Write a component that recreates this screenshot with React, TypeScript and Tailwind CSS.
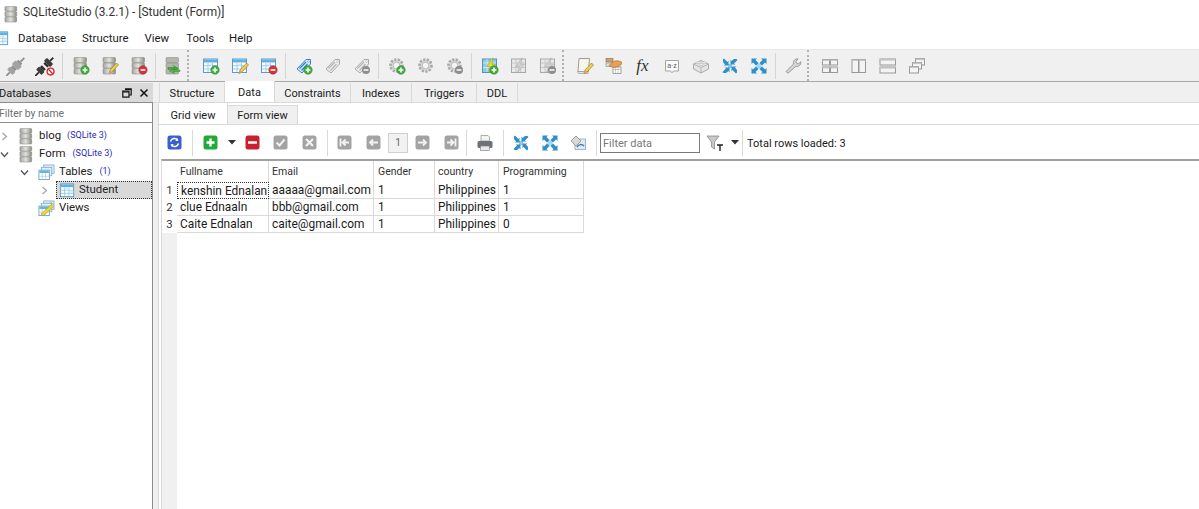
import React from "react";

type P = { className?: string };

const Badge = ({ kind }: { kind?: string }) => {
  if (kind === "add")
    return (
      <g>
        <circle cx="13" cy="13" r="4.2" fill="#3fae3c" stroke="#1f7a1f" strokeWidth="0.5" />
        <path d="M10.6 13h4.8M13 10.6v4.8" stroke="#fff" strokeWidth="1.6" />
      </g>
    );
  if (kind === "del")
    return (
      <g>
        <circle cx="13" cy="13" r="4.2" fill="#d8333a" stroke="#9a1f22" strokeWidth="0.5" />
        <path d="M10.6 13h4.8" stroke="#fff" strokeWidth="1.6" />
      </g>
    );
  if (kind === "delgray")
    return (
      <g>
        <circle cx="13" cy="13" r="4" fill="#8d8d8d" />
        <path d="M10.6 13h4.8" stroke="#fff" strokeWidth="1.5" />
      </g>
    );
  if (kind === "edit")
    return (
      <g>
        <path d="M8 16.5l1-3.5 6.5-7 2 2-6.5 7z" fill="#f3cf4a" stroke="#8f6d16" strokeWidth="0.6" />
        <path d="M8 16.5l1-3.5 2.5 2z" fill="#e8a070" />
      </g>
    );
  return null;
};

const Svg = ({ children, w = 18, h = 18 }: { children: React.ReactNode; w?: number; h?: number }) => (
  <svg width={w} height={h} viewBox="0 0 18 18" className="shrink-0">
    {children}
  </svg>
);

const Db = ({ badge, size = 18 }: { badge?: string; size?: number }) => (
  <Svg w={size} h={size}>
    <defs>
      <linearGradient id="dbg" x1="0" x2="1" y1="0" y2="0">
        <stop offset="0" stopColor="#a5a5a0" />
        <stop offset="0.5" stopColor="#e2e2de" />
        <stop offset="1" stopColor="#8a8a84" />
      </linearGradient>
    </defs>
    <rect x="2" y="0.5" width="12.5" height="5" rx="1" fill="url(#dbg)" stroke="#80807a" strokeWidth="0.5" />
    <rect x="2" y="6" width="12.5" height="5" rx="1" fill="url(#dbg)" stroke="#80807a" strokeWidth="0.5" />
    <rect x="2" y="11.5" width="12.5" height="5.5" rx="1" fill="url(#dbg)" stroke="#80807a" strokeWidth="0.5" />
    <Badge kind={badge} />
  </Svg>
);

const Table = ({ badge, gray, size = 18 }: { badge?: string; gray?: boolean; size?: number }) => {
  const edge = gray ? "#a5a5a5" : "#5b9bc9";
  const head = gray ? "#bcbcbc" : "#63b1e0";
  const cell = gray ? "#e3e3e3" : "#d7eefa";
  return (
    <Svg w={size} h={size}>
      <rect x="1.5" y="2" width="14" height="13.5" fill="#fff" stroke={edge} />
      <rect x="2" y="2.5" width="13" height="3" fill={head} />
      <path d="M6 6v9M10.5 6v9M2 8.7h13M2 12h13" stroke={gray ? "#c4c4c4" : "#8cc8ec"} strokeWidth="0.9" />
      <rect x="6.5" y="6.5" width="3.5" height="1.7" fill={cell} />
      <rect x="11" y="9.2" width="4" height="2.3" fill={cell} />
      <Badge kind={badge} />
    </Svg>
  );
};

const Tag = ({ badge, active }: { badge?: string; active?: boolean }) => (
  <Svg>
    <path
      d="M2 12L11 2.5h4.5V7L7 16z"
      fill={active ? "#d8eaf8" : "#efefef"}
      stroke={active ? "#3f7fbf" : "#a8a8a8"}
      strokeWidth="1"
    />
    <path d="M4.5 11.5L11 5M6.5 13.5L12.5 7" stroke={active ? "#2f7fd0" : "#b5b5b5"} strokeWidth="1.3" />
    <circle cx="13.4" cy="4.6" r="0.9" fill="#fff" stroke={active ? "#3f7fbf" : "#a8a8a8"} strokeWidth="0.5" />
    <Badge kind={badge} />
  </Svg>
);

const Gear = ({ badge }: { badge?: string }) => (
  <Svg>
    <circle cx="8.5" cy="8.5" r="6" fill="#dcdcdc" stroke="#a8a8a8" strokeWidth="2.6" strokeDasharray="2.2 1.4" />
    <circle cx="8.5" cy="8.5" r="3.4" fill="#f4f4f4" stroke="#a8a8a8" strokeWidth="0.8" />
    <Badge kind={badge} />
  </Svg>
);

const Trigger = ({ gray, badge }: { gray?: boolean; badge?: string }) => (
  <Svg>
    <rect x="1.5" y="2" width="14" height="13.5" fill={gray ? "#e8e8e8" : "#8fcbe8"} stroke={gray ? "#a8a8a8" : "#4d95bb"} />
    <path d="M6 2v13M10.5 2v13M2 6h13M2 10.5h13" stroke={gray ? "#c2c2c2" : "#d4eef9"} strokeWidth="0.8" />
    <path d="M12 0.8L5.8 9.5h3.4L7.4 16l7-8.8h-3.5z" fill={gray ? "#d2d2d2" : "#e7df2e"} stroke={gray ? "#a5a5a5" : "#a49a14"} strokeWidth="0.5" />
    <Badge kind={badge} />
  </Svg>
);

const Conn = ({ dark }: { dark?: boolean }) => {
  const body = dark ? "#2e2e2e" : "#8e8e8e";
  const body2 = dark ? "#3c3c3c" : "#a2a2a2";
  return (
    <Svg w={20} h={20}>
      <g transform="rotate(-45 9 9)">
        <rect x="-4" y="8.3" width="5" height="1.6" fill={body} />
        <rect x="1" y="5.5" width="4" height="7" rx="1" fill={body2} />
        <rect x="5" y="6.5" width="2.5" height="5" fill={body} />
        {dark ? <g transform="translate(1.5 0)"><rect x="8" y="6.5" width="2" height="5" fill={body} /><rect x="10" y="5" width="4" height="8" rx="1" fill={body2} /><rect x="14" y="8.2" width="4" height="1.6" fill={body} /></g> : <g><rect x="7.5" y="5" width="5" height="8" rx="1" fill={body2} /><rect x="12.5" y="6.5" width="2" height="5" fill={body} /><rect x="14.5" y="8.3" width="5" height="1.6" fill={body} /></g>}
      </g>
      {dark && (
        <g>
          <circle cx="14" cy="14" r="3.1" fill="#fff" stroke="#d02a30" strokeWidth="1.2" />
          <path d="M12 12l4 4" stroke="#d02a30" strokeWidth="1.2" />
        </g>
      )}
    </Svg>
  );
};

const Sync = () => (
  <Svg>
    <rect x="2" y="0.5" width="12.5" height="5" rx="1" fill="#b5b5ae" stroke="#80807a" strokeWidth="0.5" />
    <rect x="2" y="6" width="12.5" height="5" rx="1" fill="#b5b5ae" stroke="#80807a" strokeWidth="0.5" />
    <rect x="2" y="11.5" width="12.5" height="5.5" rx="1" fill="#b5b5ae" stroke="#80807a" strokeWidth="0.5" />
    <path d="M4 10.5h7l-1.8-2 5.5 3-5.5 3 1.8-2H4z" fill="#3bb33b" stroke="#1f7a1f" strokeWidth="0.4" />
    <path d="M16 14.5H9l1.8 2-5.5-2.5 5.5-2.5-1.8 1.5H16z" fill="#55c455" stroke="#1f7a1f" strokeWidth="0.4" />
  </Svg>
);

const Note = () => (
  <Svg>
    <path d="M3 1.5h10.5l-1 13H2z" fill="#f6f6ee" stroke="#9d9d92" />
    <path d="M1.5 14.5c0 2 1 2 1.5 2h9.5c-.6-.4-.6-1.6 0-2z" fill="#e4e4d8" stroke="#9d9d92" strokeWidth="0.7" />
    <Badge kind="edit" />
  </Svg>
);

const Import = () => (
  <Svg>
    <rect x="1" y="1.5" width="7" height="3.5" fill="#c9a17d" stroke="#8a6a49" strokeWidth="0.6" />
    <rect x="1" y="6" width="7" height="3.5" fill="#ddd" stroke="#8f8f8f" strokeWidth="0.6" />
    <rect x="8" y="10" width="8" height="6.5" fill="#fff" stroke="#7d7d7d" strokeWidth="0.7" />
    <path d="M8 12.5h8M10.5 10v6.5M13 10v6.5" stroke="#aaa" strokeWidth="0.6" />
    <path d="M4 9C8 3 12 3 16.5 5c.5 1.5-.5 3-2 4L9 10.5z" fill="#e9a04f" stroke="#a9682a" strokeWidth="0.6" />
  </Svg>
);

const Az = () => (
  <Svg>
    <path d="M2.5 3.5h13v10.5h-5L9 15.8 7.5 14h-5z" fill="#fafafa" stroke="#a5a5a5" />
    <text x="9" y="11" textAnchor="middle" fontSize="7" fill="#555" fontFamily="'Liberation Sans', sans-serif">
      a·z
    </text>
  </Svg>
);

const Brick = () => (
  <Svg>
    <path d="M1.5 7L9 3.5 16.5 7v5L9 16 1.5 12z" fill="#e4e4e4" stroke="#a8a8a8" />
    <path d="M1.5 7L9 10.5 16.5 7M9 10.5V16" fill="none" stroke="#a8a8a8" strokeWidth="0.8" />
    <ellipse cx="6" cy="5.6" rx="2" ry="1" fill="#f2f2f2" stroke="#aaa" strokeWidth="0.5" />
    <ellipse cx="12" cy="5.6" rx="2" ry="1" fill="#f2f2f2" stroke="#aaa" strokeWidth="0.5" />
    <ellipse cx="9" cy="7.6" rx="2" ry="1" fill="#f2f2f2" stroke="#aaa" strokeWidth="0.5" />
  </Svg>
);

const Arrows = ({ inward }: { inward?: boolean }) => {
  const c = "#2e8fc9";
  const a = (r: number) => (
    <g transform={`rotate(${r} 9 9)`} key={r}>
      {inward ? (
        <path d="M2 2.5l1-1 3.5 3.5 1-1.5v5H2.5L4 7.5 2 5z" fill={c} />
      ) : (
        <path d="M1.5 1.5h5.5L5.5 3l3 3-2.5 2.5-3-3L1.5 7z" fill={c} />
      )}
    </g>
  );
  return (
    <Svg>
      {inward ? <rect x="7" y="7" width="4" height="4" fill="#8cc7e8" /> : <rect x="6.5" y="6.5" width="5" height="5" fill="#a6d6f0" />}
      {[0, 90, 180, 270].map(a)}
    </Svg>
  );
};

const Wrench = () => (
  <Svg>
    <path d="M2 14.5l7.5-7.5c-.7-2.5 1.2-5.5 4.6-5.2l-2 2.4.5 2 2 .6 2.2-2c.4 3.3-2.6 5.3-5 4.6L4 16.2z" fill="#d5d5d5" stroke="#8c8c8c" strokeWidth="0.8" />
  </Svg>
);

const Win = ({ kind }: { kind: string }) => {
  const s = { fill: "#f4f4f4", stroke: "#989898", strokeWidth: 1 };
  const b = { fill: "#c4c4c4" };
  return (
    <Svg>
      {kind === "grid" &&
        [
          [1.5, 2.5],
          [9.5, 2.5],
          [1.5, 10],
          [9.5, 10],
        ].map(([x, y]) => (
          <g key={`${x}-${y}`}>
            <rect x={x} y={y} width="7" height="5.5" {...s} />
            <rect x={x} y={y} width="7" height="1.4" {...b} />
          </g>
        ))}
      {kind === "cols" && (
        <g>
          <rect x="2" y="2.5" width="6.5" height="13" {...s} />
          <rect x="2" y="2.5" width="6.5" height="1.4" {...b} />
          <rect x="9" y="2.5" width="6.5" height="13" {...s} />
          <rect x="9" y="2.5" width="6.5" height="1.4" {...b} />
        </g>
      )}
      {kind === "rows" && (
        <g>
          <rect x="1" y="2" width="15.5" height="6" {...s} />
          <rect x="1" y="2" width="15.5" height="1.6" {...b} />
          <rect x="1" y="10" width="15.5" height="6" {...s} />
          <rect x="1" y="10" width="15.5" height="1.6" {...b} />
        </g>
      )}
      {kind === "casc" &&
        [
          [7.5, 1.5],
          [4.5, 5.5],
          [1.5, 9.5],
        ].map(([x, y]) => (
          <g key={x}>
            <rect x={x} y={y} width="9" height="6.5" {...s} />
            <rect x={x} y={y} width="9" height="1.6" {...b} />
          </g>
        ))}
    </Svg>
  );
};

const Btn = ({ children }: { children: React.ReactNode }) => (
  <div className="flex h-full w-[29px] shrink-0 items-center justify-center">{children}</div>
);

const Sep = ({ className = "ml-[2px] mr-[3px]" }: P) => <div className={`h-[26px] w-px shrink-0 bg-[#d4d4d4] ${className}`} />;

const Grip = ({ className = "" }: P) => (
  <div className={`h-full w-0 shrink-0 border-l-2 border-dotted border-[#b0b0b0] ${className}`} />
);

const Square = ({ color, children }: { color: string; children: React.ReactNode }) => (
  <svg width="15" height="15" viewBox="0 0 15 15" className="shrink-0">
    <rect x="0.5" y="0.5" width="14" height="14" rx="2.5" fill={color} />
    {children}
  </svg>
);

const Tab = ({ label, w, active }: { label: string; w: string; active?: boolean }) => (
  <div
    className={`flex shrink-0 items-center justify-center border-r border-[#d9d9d9] pt-[2px] ${w} ${
      active ? "-mt-[1px] h-[21px] bg-white" : "h-[19px] bg-[#f0f0f0]"
    }`}
  >
    {label}
  </div>
);

const rows = [
  ["kenshin Ednalan", "aaaaa@gmail.com", "1", "Philippines", "1"],
  ["clue Ednaaln", "bbb@gmail.com", "1", "Philippines", "1"],
  ["Caite Ednalan", "caite@gmail.com", "1", "Philippines", "0"],
];
const cols = ["w-[92px] pl-[3px]", "w-[105px] pl-[3px]", "w-[61px] pl-[4px]", "w-[64px] pl-[3px]", "w-[85px] pl-[4px]"];
const heads = ["Fullname", "Email", "Gender", "country", "Programming"];

const Chevron = ({ open }: { open?: boolean }) => (
  <svg width="9" height="9" viewBox="0 0 9 9" className="shrink-0">
    {open ? (
      <path d="M1 2.5l3.5 4 3.5-4" fill="none" stroke="#555" strokeWidth="1.3" />
    ) : (
      <path d="M2.5 1l4 3.5-4 3.5" fill="none" stroke="#a6a6a6" strokeWidth="1.3" />
    )}
  </svg>
);

const Folder = ({ views }: { views?: boolean }) => (
  <svg width="17" height="17" viewBox="0 0 18 18" className="shrink-0">
    <rect x="6" y="1" width="11" height="9" fill="#d6ecf8" stroke="#7fa9c4" strokeWidth="0.8" />
    <rect x="3.5" y="3.5" width="11" height="9" fill="#e3f2fb" stroke="#7fa9c4" strokeWidth="0.8" />
    <rect x="1" y="6.5" width="11" height="10" fill="#fff" stroke="#6d9cbc" strokeWidth="0.9" />
    <rect x="1.5" y="7" width="10" height="2.5" fill="#67b4e2" />
    <path d="M4.5 9.5v7M8 9.5v7M1.5 13h10" stroke="#9fcce9" strokeWidth="0.7" />
    {views && <path d="M3 15L14 5l2.5 2L6 16.5zM13 2l4 3" stroke="#b89a10" strokeWidth="0.6" fill="#ecd52e" />}
  </svg>
);

export default function App() {
  return (
    <div className="flex h-[509px] w-[1199px] flex-col overflow-hidden bg-white font-['Roboto',sans-serif] text-[11px] leading-none text-[#1a1a1a]">
      <div className="flex h-[28px] shrink-0 items-center pl-[3px] text-[#333]">
        <Db size={17} />
        <span className="ml-[3px] -translate-y-[1px] text-[11.9px]">SQLiteStudio (3.2.1) - [Student (Form)]</span>
      </div>
      <div className="flex h-[21px] shrink-0 items-center text-[11.4px]">
        <div className="-ml-[7px] mr-[8px] w-[17px]">
          <Table size={17} />
        </div>
        <span className="mr-[16px]">Database</span>
        <span className="mr-[16px]">Structure</span>
        <span className="mr-[17px]">View</span>
        <span className="mr-[15px]">Tools</span>
        <span>Help</span>
      </div>
      <div className="flex h-[33px] shrink-0 items-center border-y border-b-[#a8a8a8] border-t-[#e8e8e8] bg-[#f0f0f0] pl-[1px]">
        <Btn><Conn /></Btn>
        <Btn><Conn dark /></Btn>
        <Sep className="mx-[3px]" />
        <Btn><Db badge="add" /></Btn>
        <Btn><Db badge="edit" /></Btn>
        <Btn><Db badge="del" /></Btn>
        <Sep className="mx-[2px]" />
        <Btn><Sync /></Btn>
        <Grip />
        <div className="w-[7px]" />
        <Btn><Table badge="add" /></Btn>
        <Btn><Table badge="edit" /></Btn>
        <Btn><Table badge="del" /></Btn>
        <Sep />
        <Btn><Tag active badge="add" /></Btn>
        <Btn><Tag /></Btn>
        <Btn><Tag badge="delgray" /></Btn>
        <Sep />
        <Btn><Gear badge="add" /></Btn>
        <Btn><Gear /></Btn>
        <Btn><Gear badge="delgray" /></Btn>
        <Sep />
        <Btn><Trigger badge="add" /></Btn>
        <Btn><Trigger gray /></Btn>
        <Btn><Trigger gray badge="delgray" /></Btn>
        <Grip />
        <div className="w-[6px]" />
        <Btn><Note /></Btn>
        <Btn><Import /></Btn>
        <Btn>
          <span className="font-['Liberation_Serif',serif] text-[17px] italic text-[#333]">fx</span>
        </Btn>
        <Btn><Az /></Btn>
        <Btn><Brick /></Btn>
        <Btn><Arrows inward /></Btn>
        <Btn><Arrows /></Btn>
        <Sep className="mx-[2px]" />
        <Btn><Wrench /></Btn>
        <Grip />
        <div className="w-[6px]" />
        <Btn><Win kind="grid" /></Btn>
        <Btn><Win kind="cols" /></Btn>
        <Btn><Win kind="rows" /></Btn>
        <Btn><Win kind="casc" /></Btn>
      </div>
      <div className="flex min-h-0 flex-1 bg-[#f0f0f0]">
        <div className="flex w-[153px] shrink-0 flex-col pt-[1px]">
          <div className="flex h-[19px] shrink-0 items-center justify-between bg-[#d9d9d9] pr-[4px] pt-[1px]">
            <span className="-ml-[1px]">Databases</span>
            <div className="flex items-center gap-[7px]">
              <svg width="10" height="10" viewBox="0 0 10 10">
                <path d="M3 .8h6.2V7H7M.8 3H7v6.2H.8z" fill="none" stroke="#111" strokeWidth="1.2" />
                <path d="M3 1.5h6M1 3.8h6" stroke="#111" strokeWidth="1.2" />
              </svg>
              <svg width="10" height="10" viewBox="0 0 10 10">
                <path d="M1.5 1.5l7 7M8.5 1.5l-7 7" stroke="#111" strokeWidth="1.5" />
              </svg>
            </div>
          </div>
          <div className="flex h-[21px] shrink-0 items-center border-y border-r border-[#8c8c8c] bg-white pt-[3px] text-[10.4px] text-[#6e6e6e]">
            <span className="-ml-[1px]">Filter by name</span>
          </div>
          <div className="flex flex-1 flex-col border-r border-[#8c8c8c] bg-white pt-[4px] text-[11.4px] text-[#222]">
            <div className="flex h-[18px] items-center">
              <Chevron />
              <div className="ml-[9px] w-[21px]"><Db size={17} /></div>
              <span>blog</span>
              <span className="ml-[6px] -translate-y-[1px] text-[9px] text-[#2a2ab8]">(SQLite 3)</span>
            </div>
            <div className="flex h-[18px] items-center">
              <Chevron open />
              <div className="ml-[9px] w-[21px]"><Db size={17} /></div>
              <span>Form</span>
              <span className="ml-[7px] -translate-y-[1px] text-[9px] text-[#2a2ab8]">(SQLite 3)</span>
            </div>
            <div className="flex h-[18px] items-center pl-[20px]">
              <Chevron open />
              <div className="ml-[9px] w-[21px]"><Folder /></div>
              <span>Tables</span>
              <span className="ml-[7px] -translate-y-[1px] text-[9px] text-[#2a2ab8]">(1)</span>
            </div>
            <div className="flex h-[18px] items-center pl-[40px]">
              <Chevron />
              <div className="ml-[7px] flex h-full flex-1 items-center border border-dotted border-[#333] bg-[#d9d9d9] pl-[2px]">
                <Table size={17} />
                <span className="ml-[3px]">Student</span>
              </div>
            </div>
            <div className="flex h-[18px] items-center pl-[38px]">
              <Folder views />
              <span className="ml-[4px]">Views</span>
            </div>
          </div>
        </div>
        <div className="flex min-w-0 flex-1 flex-col pt-[1px]">
          <div className="flex h-[20px] shrink-0 items-end border-b border-[#d9d9d9] pl-[6px]">
            <Tab label="Structure" w="w-[66px] border-l" />
            <Tab label="Data" w="w-[50px]" active />
            <Tab label="Constraints" w="w-[76px]" />
            <Tab label="Indexes" w="w-[61px]" />
            <Tab label="Triggers" w="w-[65px]" />
            <Tab label="DDL" w="w-[41px]" />
          </div>
          <div className="ml-[5px] flex min-h-0 flex-1 flex-col border-l border-[#d9d9d9] bg-white">
            <div className="flex h-[22px] shrink-0 items-end border-b border-[#d9d9d9]">
              <div className="flex h-[21px] w-[69px] items-center justify-center border-r border-[#d9d9d9] bg-white pt-[3px]">Grid view</div>
              <div className="flex h-[19px] w-[70px] items-center justify-center border-r border-t border-[#d9d9d9] bg-[#f0f0f0]">Form view</div>
            </div>
            <div className="flex h-[34px] shrink-0 items-center pl-[3px] pt-[1px]">
              <div className="flex w-[30px] items-center justify-start pl-[5px]">
                <Square color="#3a5fd0">
                  <path d="M3.5 6.5a4 4 0 017-1.5M11.5 8.5a4 4 0 01-7 1.5" fill="none" stroke="#fff" strokeWidth="1.5" />
                  <path d="M10 2.8l1.5 3-3 .1zM5 12.2l-1.5-3 3-.1z" fill="#fff" />
                </Square>
              </div>
              <div className="h-[26px] w-px bg-[#d9d9d9]" />
              <div className="flex w-[34px] justify-center pl-[1px]">
                <Square color="#22a93a">
                  <path d="M3.5 7.5h8M7.5 3.5v8" stroke="#fff" strokeWidth="2.4" />
                </Square>
              </div>
              <svg width="8" height="5" viewBox="0 0 8 5" className="ml-[1px]"><path d="M0 0h8L4 4.5z" fill="#333" /></svg>
              <div className="flex w-[33px] justify-center"><Square color="#c8202c"><path d="M3 7.5h9" stroke="#fff" strokeWidth="2.4" /></Square></div>
              <div className="flex w-[22px] justify-center"><Square color="#a3a3a3"><path d="M3.5 7.5l3 3 5-6" fill="none" stroke="#f2f2f2" strokeWidth="2" /></Square></div>
              <div className="flex w-[36px] justify-center"><Square color="#a3a3a3"><path d="M4 4l7 7M11 4l-7 7" stroke="#f2f2f2" strokeWidth="2.2" /></Square></div>
              <div className="h-[26px] w-px bg-[#d9d9d9]" />
              <div className="flex w-[33px] justify-center"><Square color="#a3a3a3"><path d="M3.5 3.5v8M12 7.5H6M8.5 4.5l-3 3 3 3" fill="none" stroke="#f2f2f2" strokeWidth="1.8" /></Square></div>
              <div className="flex w-[25px] justify-center"><Square color="#a3a3a3"><path d="M12 7.5H4M7 4.5l-3 3 3 3" fill="none" stroke="#f2f2f2" strokeWidth="1.8" /></Square></div>
              <div className="ml-[2px] flex h-[20px] w-[20px] items-center justify-center border border-[#d0d0d0] bg-[#f2f2f2] text-[10px] text-[#666]">1</div>
              <div className="flex w-[29px] justify-center"><Square color="#a3a3a3"><path d="M3 7.5h8M8 4.5l3 3-3 3" fill="none" stroke="#f2f2f2" strokeWidth="1.8" /></Square></div>
              <div className="flex w-[29px] justify-center"><Square color="#a3a3a3"><path d="M11.5 3.5v8M3 7.5h6M6.5 4.5l3 3-3 3" fill="none" stroke="#f2f2f2" strokeWidth="1.8" /></Square></div>
              <div className="h-[26px] w-px bg-[#d9d9d9]" />
              <div className="flex w-[36px] justify-center">
                <svg width="18" height="18" viewBox="0 0 18 18">
                  <path d="M5 1.5h7l1.5 1.5v4H5z" fill="#f4f4f4" stroke="#8d8d8d" strokeWidth="0.7" />
                  <rect x="1.5" y="7" width="15" height="7" rx="1.5" fill="#6d7279" />
                  <rect x="4.5" y="12" width="9" height="4.5" fill="#e8e8e8" stroke="#777" strokeWidth="0.6" />
                </svg>
              </div>
              <div className="h-[26px] w-px bg-[#d9d9d9]" />
              <div className="flex w-[33px] justify-center"><Arrows inward /></div>
              <div className="flex w-[26px] justify-center"><Arrows /></div>
              <div className="flex w-[30px] justify-center">
                <svg width="18" height="18" viewBox="0 0 18 18">
                  <rect x="6" y="5" width="10.5" height="10.5" fill="#dfe9f2" stroke="#8ba5bd" strokeWidth="0.8" />
                  <path d="M2 7l5-5 5 5-5 5z" fill="#d8d8d8" stroke="#8d8d8d" strokeWidth="0.8" />
                  <path d="M8 13c2-3 5-3 7-1" fill="none" stroke="#3a7cc0" strokeWidth="1.5" />
                </svg>
              </div>
              <div className="ml-[3px] h-[26px] w-px bg-[#d9d9d9]" />
              <div className="ml-[3px] flex h-[20px] w-[100px] items-center border border-[#7a7a7a] px-[2px] pt-[1px] text-[#777]">Filter data</div>
              <div className="ml-[6px] flex w-[18px] justify-center">
                <svg width="18" height="18" viewBox="0 0 18 18">
                  <path d="M1 2h12L8.5 8v7L5.5 13V8z" fill="#c9c9c9" stroke="#8a8a8a" strokeWidth="0.8" />
                  <path d="M11 11h6M14 11v6" stroke="#222" strokeWidth="1.4" />
                </svg>
              </div>
              <svg width="8" height="5" viewBox="0 0 8 5" className="ml-[7px]"><path d="M0 0h8L4 4.5z" fill="#333" /></svg>
              <div className="ml-[3px] h-[26px] w-px bg-[#d9d9d9]" />
              <span className="ml-[4px] pt-[1px]">Total rows loaded: 3</span>
            </div>
            <div className="flex min-h-0 flex-1 pl-[2px]">
              <div className="flex min-w-0 flex-1 border-l border-t-2 border-[#a0a0a0] border-l-[#d9d9d9]">
                <div className="flex w-[15px] shrink-0 flex-col bg-[#f0f0f0] text-[11.4px] text-[#333]">
                  <div className="h-[21px] bg-white" />
                  {["1", "2", "3"].map((n) => (
                    <div key={n} className="flex h-[17px] items-center justify-center bg-white">{n}</div>
                  ))}
                </div>
                <div className="flex flex-col text-[11.9px]">
                  <div className="flex h-[21px] text-[10.5px]">
                    {heads.map((h, i) => (
                      <div key={h} className={`${cols[i]} flex items-center border-r border-[#d9d9d9] pt-[2px] text-[#333]`}>{h}</div>
                    ))}
                  </div>
                  {rows.map((r, ri) => (
                    <div key={ri} className="flex h-[17px] border-[#d9d9d9]">
                      {r.map((c, i) => (
                        <div
                          key={i}
                          className={`${cols[i]} flex items-center whitespace-nowrap border-b border-r pt-[2px] ${ri === 0 && i === 0 ? "border border-dotted border-[#333] pl-[2px]" : "border-[#d9d9d9]"}`}
                        >
                          {c}
                        </div>
                      ))}
                    </div>
                  ))}
                </div>
              </div>
            </div>
          </div>
        </div>
      </div>
    </div>
  );
}
